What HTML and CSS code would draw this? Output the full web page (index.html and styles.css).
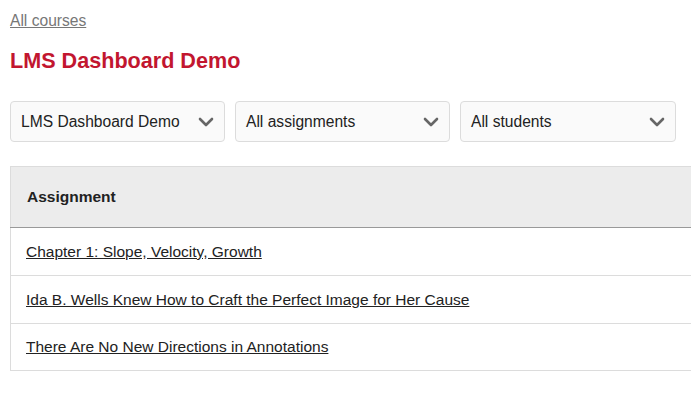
FILE: index.html
```html
<!DOCTYPE html>
<html>
<head>
<meta charset="utf-8">
<link rel="stylesheet" href="styles.css">
</head>
<body>
<div class="page">
  <a class="back" href="#">All courses</a>
  <h1 class="title">LMS Dashboard Demo</h1>
  <div class="filters">
    <div class="select"><span>LMS Dashboard Demo</span><svg class="chev" viewBox="0 0 16 10" width="16" height="10"><path d="M2 2 L8 8 L14 2" fill="none" stroke="#666" stroke-width="2.6" stroke-linecap="round" stroke-linejoin="round"/></svg></div>
    <div class="select"><span>All assignments</span><svg class="chev" viewBox="0 0 16 10" width="16" height="10"><path d="M2 2 L8 8 L14 2" fill="none" stroke="#666" stroke-width="2.6" stroke-linecap="round" stroke-linejoin="round"/></svg></div>
    <div class="select"><span>All students</span><svg class="chev" viewBox="0 0 16 10" width="16" height="10"><path d="M2 2 L8 8 L14 2" fill="none" stroke="#666" stroke-width="2.6" stroke-linecap="round" stroke-linejoin="round"/></svg></div>
  </div>
  <div class="table-wrap">
    <table class="grid">
      <thead><tr><th>Assignment</th></tr></thead>
      <tbody>
        <tr><td><a href="#">Chapter 1: Slope, Velocity, Growth</a></td></tr>
        <tr><td><a href="#">Ida B. Wells Knew How to Craft the Perfect Image for Her Cause</a></td></tr>
        <tr class="last"><td><a href="#">There Are No New Directions in Annotations</a></td></tr>
      </tbody>
    </table>
  </div>
</div>
</body>
</html>
```
FILE: styles.css
```css
html { overflow: hidden; }
body {
  margin: 0;
  font-family: "Liberation Sans", Arial, sans-serif;
  color: #222;
  background: #fff;
}
.page { padding: 11px 0 0 10px; }
.back {
  display: block;
  font-size: 15.6px;
  line-height: 20px;
  color: #777;
  text-decoration: underline;
  width: max-content;
}
.title {
  margin: 17px 0 0 0;
  font-size: 21.6px;
  line-height: 26px;
  font-weight: bold;
  color: #c2162f;
}
.filters {
  display: flex;
  gap: 10px;
  margin-top: 27px;
}
.select {
  box-sizing: border-box;
  width: 215px;
  height: 41px;
  border: 1px solid #dcdcdc;
  border-radius: 4px;
  background: #fafafa;
  display: flex;
  align-items: center;
  justify-content: space-between;
  padding: 0 10px 0 10px;
  font-size: 15.6px;
  color: #222;
}
.select:nth-child(3) { width: 216px; }
.chev { display: block; }
.table-wrap { margin-top: 24px; width: 900px; }
.grid {
  width: 100%;
  border-collapse: collapse;
  border-left: 1px solid #dcdcdc;
  border-bottom: 1px solid #dcdcdc;
}
.grid th {
  text-align: left;
  background: #ececec;
  border-top: 1px solid #dcdcdc;
  border-bottom: 1px solid #999;
  height: 60px;
  padding: 0 16px;
  font-size: 15.5px;
  font-weight: bold;
  color: #222;
}
.grid td {
  height: 47px;
  padding: 0 15px;
  border-top: 1px solid #dcdcdc;
  font-size: 15.5px;
}
.grid tbody tr:first-child td { border-top: none; height: 47px; }
.grid tbody tr.last td { height: 46px; }
.grid td a { color: #222; text-decoration: underline; }
```
